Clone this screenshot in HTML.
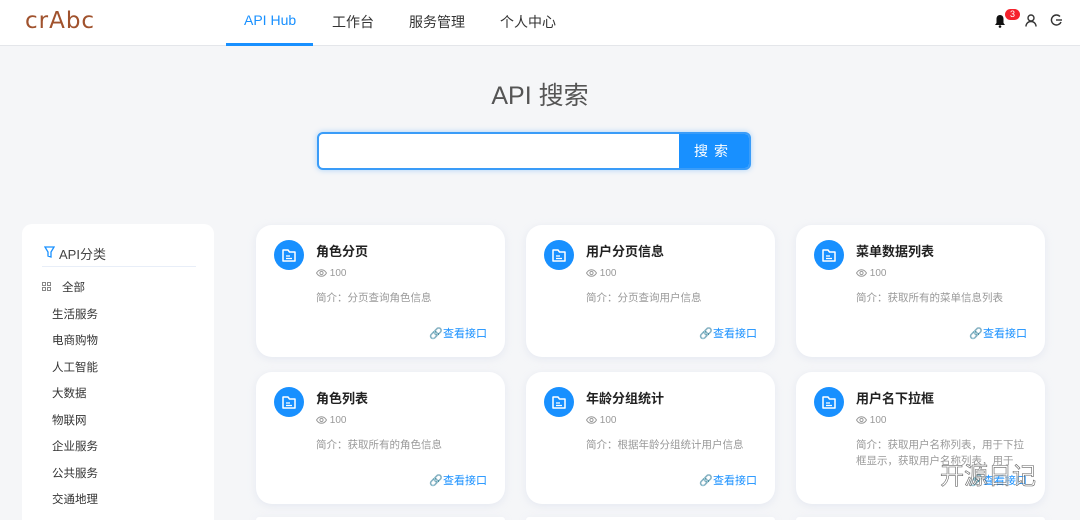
<!DOCTYPE html><html><head><meta charset="utf-8"><style>
*{margin:0;padding:0;box-sizing:border-box}
html,body{width:1080px;height:520px;overflow:hidden}
body{background:#f5f6f8;font-family:"Liberation Sans","Noto Sans CJK SC",sans-serif;position:relative}
.hdr{position:absolute;left:0;top:0;width:1080px;height:46px;background:#fff;border-bottom:1px solid #e4e6ea}
.logo{position:absolute;left:25px;top:8px;font-size:23px;color:#a0522d;letter-spacing:1px;font-family:"DejaVu Sans",sans-serif}
.nav{position:absolute;top:12px;font-size:14px;color:#333}
.act{color:#1890ff}
.ul{position:absolute;left:226px;top:43px;width:87px;height:3px;background:#1890ff}
h1{position:absolute;left:0;width:1080px;top:76px;text-align:center;font-weight:normal;font-size:25px;color:#555}
.sb{position:absolute;left:317px;top:132px;width:434px;height:38px;border:2px solid #3a9cf8;border-radius:6px;background:#fff;box-shadow:0 0 6px rgba(24,144,255,.35);overflow:hidden}
.sb b{position:absolute;right:0;top:0;width:70px;height:34px;background:#1890ff;color:#fff;font-weight:normal;font-size:14px;text-align:center;line-height:34px;letter-spacing:6px}
.side{position:absolute;left:22px;top:224px;width:192px;height:296px;background:#fff;border-radius:10px 10px 0 0}
.side .t{position:absolute;left:22px;top:20px;font-size:13px;color:#444}
.side .ln{position:absolute;left:20px;right:18px;top:42px;border-top:1px solid #e8eef8}
.side .i{position:absolute;left:30px;font-size:11.5px;color:#333}
.card{position:absolute;width:249px;height:132px;background:#fff;border-radius:16px;box-shadow:0 2px 8px rgba(200,210,230,.35)}
.ic{position:absolute;left:18px;top:15px;width:30px;height:30px;border-radius:50%;background:#1890ff}
.ct{position:absolute;left:60px;top:16px;font-size:13px;color:#222;font-weight:bold}
.cv{position:absolute;left:60px;top:43px;font-size:10px;color:#999}
.cd{position:absolute;left:60px;top:65px;width:175px;font-size:10.5px;color:#999;line-height:16px}
.cl{position:absolute;right:18px;top:100px;font-size:11px;color:#1890ff}
</style></head><body>
<div class="hdr">
<div class="logo">crAbc</div>
<div class="nav act" style="left:244px">API Hub</div>
<div class="nav" style="left:332px">工作台</div>
<div class="nav" style="left:409px">服务管理</div>
<div class="nav" style="left:500px">个人中心</div>
<div class="ul"></div>
<svg style="position:absolute;left:994px;top:14px" width="12" height="14" viewBox="0 0 12 14"><path d="M6 1C3.5 1 2.5 3 2.5 5v4L1 11h10L9.5 9V5C9.5 3 8.5 1 6 1z" fill="#111"/><circle cx="6" cy="12.5" r="1.3" fill="#111"/></svg>
<div style="position:absolute;left:1005px;top:9px;width:15px;height:11px;border-radius:6px;background:#f5222d;color:#fff;font-size:9px;text-align:center;line-height:11px">3</div>
<svg style="position:absolute;left:1025px;top:14px" width="12" height="13" viewBox="0 0 12 13"><circle cx="6" cy="4" r="3" fill="none" stroke="#333" stroke-width="1.4"/><path d="M1 12.5c0-3 2.2-5 5-5s5 2 5 5" fill="none" stroke="#333" stroke-width="1.4"/></svg>
<svg style="position:absolute;left:1050px;top:13px" width="13" height="14" viewBox="0 0 13 14"><path d="M10 3.5A5 5 0 1 0 11 9" fill="none" stroke="#333" stroke-width="1.4"/><path d="M6 7h6" stroke="#333" stroke-width="1.4"/></svg>
</div>
<h1>API 搜索</h1>
<div class="sb"><b>搜索</b></div>
<div class="side">
<svg style="position:absolute;left:22px;top:22px" width="11" height="12" viewBox="0 0 11 12"><path d="M1 1h9L7 6v5L4 10V6z" fill="none" stroke="#1890ff" stroke-width="1.3"/></svg>
<div class="t" style="left:37px">API分类</div><div class="ln"></div>
<svg style="position:absolute;left:20px;top:58px" width="9" height="9" viewBox="0 0 9 9" fill="none" stroke="#888" stroke-width="1"><rect x=".5" y=".5" width="3" height="3"/><rect x="5.5" y=".5" width="3" height="3"/><rect x=".5" y="5.5" width="3" height="3"/><rect x="5.5" y="5.5" width="3" height="3"/></svg>
<div class="i" style="left:40px;top:55px">全部</div>
<div class="i" style="top:82px">生活服务</div>
<div class="i" style="top:108px">电商购物</div>
<div class="i" style="top:135px">人工智能</div>
<div class="i" style="top:161px">大数据</div>
<div class="i" style="top:188px">物联网</div>
<div class="i" style="top:214px">企业服务</div>
<div class="i" style="top:241px">公共服务</div>
<div class="i" style="top:267px">交通地理</div>
</div>
<div class="card" style="left:256px;top:225px"><div class="ic"></div><div class="ct">角色分页</div><div class="cv">👁 100</div><div class="cd">简介：分页查询角色信息</div><div class="cl">🔗查看接口</div></div>
<div class="card" style="left:526px;top:225px"><div class="ic"></div><div class="ct">用户分页信息</div><div class="cv">👁 100</div><div class="cd">简介：分页查询用户信息</div><div class="cl">🔗查看接口</div></div>
<div class="card" style="left:796px;top:225px"><div class="ic"></div><div class="ct">菜单数据列表</div><div class="cv">👁 100</div><div class="cd">简介：获取所有的菜单信息列表</div><div class="cl">🔗查看接口</div></div>
<div class="card" style="left:256px;top:372px"><div class="ic"></div><div class="ct">角色列表</div><div class="cv">👁 100</div><div class="cd">简介：获取所有的角色信息</div><div class="cl">🔗查看接口</div></div>
<div class="card" style="left:526px;top:372px"><div class="ic"></div><div class="ct">年龄分组统计</div><div class="cv">👁 100</div><div class="cd">简介：根据年龄分组统计用户信息</div><div class="cl">🔗查看接口</div></div>
<div class="card" style="left:796px;top:372px"><div class="ic"></div><div class="ct">用户名下拉框</div><div class="cv">👁 100</div><div class="cd">简介：获取用户名称列表，用于下拉框显示，获取用户名称列表，用于</div><div class="cl">🔗查看接口</div></div>
<div class="card" style="left:256px;top:517px;height:3px;border-radius:3px 3px 0 0"></div><div class="card" style="left:526px;top:517px;height:3px;border-radius:3px 3px 0 0"></div><div class="card" style="left:796px;top:517px;height:3px;border-radius:3px 3px 0 0"></div>
<div style="position:absolute;left:940px;top:456px;font-size:24px;color:rgba(255,255,255,.6);-webkit-text-stroke:0.6px #666">开源日记</div>
<script>
document.querySelectorAll('.ic').forEach(e=>e.innerHTML='<svg width="30" height="30" viewBox="0 0 30 30"><path d="M9 10h5l1.5 2H21v9H9z" fill="none" stroke="#fff" stroke-width="1.5" stroke-linejoin="round"/><path d="M12 16h4M12 18.5h6" stroke="#fff" stroke-width="1.3"/></svg>');
document.querySelectorAll('.cv').forEach(e=>e.innerHTML='<svg width="11" height="8" viewBox="0 0 11 8" style="vertical-align:-1px"><path d="M.5 4C2 1.5 3.5.7 5.5.7S9 1.5 10.5 4C9 6.5 7.5 7.3 5.5 7.3S2 6.5.5 4z" fill="none" stroke="#999"/><circle cx="5.5" cy="4" r="1.6" fill="none" stroke="#999"/></svg> 100');
</script>
</body></html>
